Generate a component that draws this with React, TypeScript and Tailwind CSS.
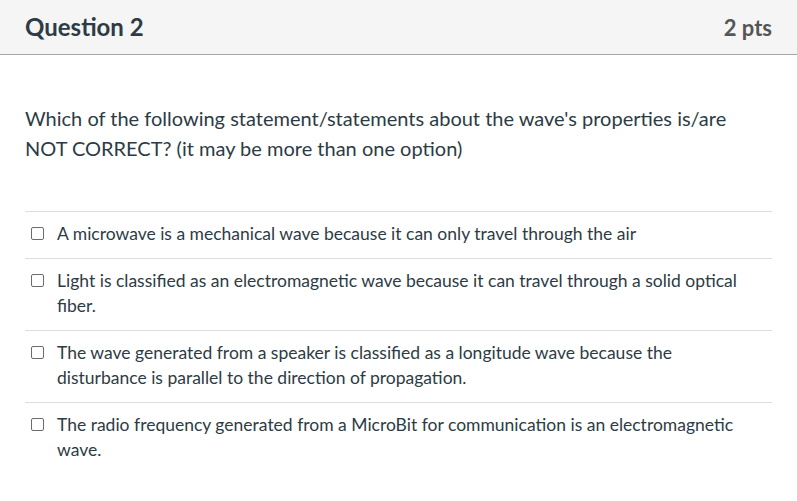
import React from "react";

const options = [
  "A microwave is a mechanical wave because it can only travel through the air",
  "Light is classified as an electromagnetic wave because it can travel through a solid optical fiber.",
  "The wave generated from a speaker is classified as a longitude wave because the disturbance is parallel to the direction of propagation.",
  "The radio frequency generated from a MicroBit for communication is an electromagnetic wave.",
];

export default function App() {
  return (
    <div className="w-[797px] h-[501px] bg-white overflow-hidden text-[#2d3b45]" style={{ fontFamily: "Lato, 'Noto Sans', sans-serif" }}>
      <div className="h-[55px] bg-[#f5f5f5] border-b border-[#a5a5a5] px-[25px] flex items-center justify-between">
        <div className="text-[24px] font-bold text-[#2d3b45]">Question 2</div>
        <div className="text-[22px] font-bold text-[#555555]">2 pts</div>
      </div>
      <div className="px-[25px] pt-[48px]">
        <p className="text-[20px] leading-[30px] pr-[30px]">
          Which of the following statement/statements about the wave's properties is/are NOT CORRECT? (it may be more than one option)
        </p>
        <div className="mt-[48px]">
          {options.map((o, i) => (
            <div key={i} className="border-t border-[#dcdfe2] flex items-start pt-[9px] pb-[12px] pr-[20px]">
              <div className="w-[13px] h-[13px] mt-[6px] ml-[6px] mr-[13px] shrink-0 rounded-[2px] border border-[#6b6b6b]" />
              <div className="text-[17.5px] leading-[25px]">{o}</div>
            </div>
          ))}
        </div>
      </div>
    </div>
  );
}
